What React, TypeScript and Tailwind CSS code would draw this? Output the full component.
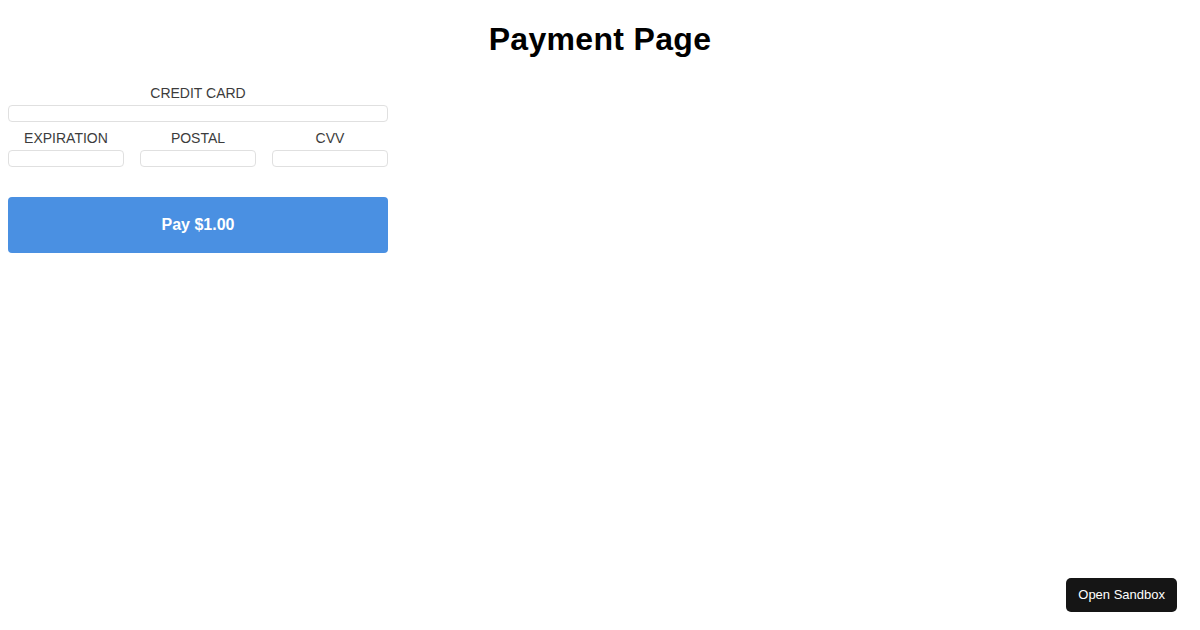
export default function App() {
  return (
    <div className="min-h-[630px] bg-white font-['Liberation_Sans',Arial,sans-serif] relative">
      <div className="px-2 pt-[21px]">
        <h1 className="text-center text-[32px] leading-[37px] font-bold text-black tracking-[0.01em]">Payment Page</h1>

        <form className="w-[380px] mt-[24px]">
          <label className="block pt-px text-center text-[14px] leading-[20px] text-[#3c3c3c]">CREDIT CARD</label>
          <div className="mt-[2px] h-[17px] rounded-[4px] border border-[#e0e0e0] bg-white" />

          <div className="mt-[5px] grid grid-cols-3 gap-4">
            {["EXPIRATION", "POSTAL", "CVV"].map((label) => (
              <div key={label}>
                <label className="block pt-px text-center text-[14px] leading-[20px] text-[#3c3c3c]">{label}</label>
                <div className="mt-[2px] h-[17px] rounded-[4px] border border-[#e0e0e0] bg-white" />
              </div>
            ))}
          </div>

          <button
            type="button"
            className="mt-[30px] w-full h-[56px] rounded-[4px] bg-[#4a90e2] text-white text-[16px] font-bold"
          >
            Pay $1.00
          </button>
        </form>
      </div>

      <button
        type="button"
        className="absolute right-[23px] bottom-[18px] h-[34px] px-[12px] rounded-[5px] bg-[#151515] text-white text-[13px]"
      >
        Open Sandbox
      </button>
    </div>
  );
}
